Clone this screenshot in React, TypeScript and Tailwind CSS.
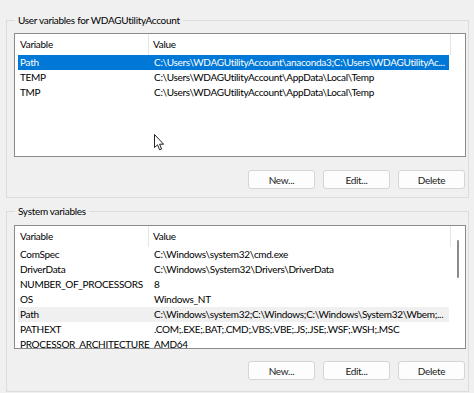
import React from "react";

interface EnvVar {
  name: string;
  value: string;
}

const userVars: EnvVar[] = [
  { name: "Path", value: "C:\\Users\\WDAGUtilityAccount\\anaconda3;C:\\Users\\WDAGUtilityAc..." },
  { name: "TEMP", value: "C:\\Users\\WDAGUtilityAccount\\AppData\\Local\\Temp" },
  { name: "TMP", value: "C:\\Users\\WDAGUtilityAccount\\AppData\\Local\\Temp" },
];

const systemVars: EnvVar[] = [
  { name: "ComSpec", value: "C:\\Windows\\system32\\cmd.exe" },
  { name: "DriverData", value: "C:\\Windows\\System32\\Drivers\\DriverData" },
  { name: "NUMBER_OF_PROCESSORS", value: "8" },
  { name: "OS", value: "Windows_NT" },
  { name: "Path", value: "C:\\Windows\\system32;C:\\Windows;C:\\Windows\\System32\\Wbem;..." },
  { name: "PATHEXT", value: ".COM;.EXE;.BAT;.CMD;.VBS;.VBE;.JS;.JSE;.WSF;.WSH;.MSC" },
  { name: "PROCESSOR_ARCHITECTURE", value: "AMD64" },
];

const Button: React.FC<{ label: string }> = ({ label }) => (
  <button className="w-[67px] h-[19px] bg-[#fdfdfd] border border-[#d5d5d5] rounded-[3px] text-[#1a1a1a] leading-none">
    {label}
  </button>
);

const VarList: React.FC<{
  rows: EnvVar[];
  selected: number;
  focused: boolean;
  scrollbar?: boolean;
}> = ({ rows, selected, focused, scrollbar }) => (
  <div className="relative w-[452px] h-[124px] bg-white border border-[#8a8a8a] overflow-hidden">
    {/* header */}
    <div className="flex h-[21px] items-center w-[436px]">
      <div className="w-[134px] h-full pl-[5px] flex items-center border-r border-[#e5e5e5]">Variable</div>
      <div className="flex-1 h-full pl-[4px] flex items-center border-r border-[#e5e5e5]">Value</div>
    </div>
    {rows.map((r, i) => {
      const sel = i === selected;
      const cls = sel
        ? focused
          ? "bg-[#0078d7] text-white"
          : "bg-[#f0f0f0] text-black"
        : "text-black";
      return (
        <div key={i} className={`flex h-[15px] items-center ml-[3px] w-[431px] ${cls}`}>
          <div className="w-[131px] pl-[2px] whitespace-nowrap">{r.name}</div>
          <div className="flex-1 pl-[5px] whitespace-nowrap">{r.value}</div>
        </div>
      );
    })}
    {scrollbar && (
      <div className="absolute right-[6px] top-[14px] w-[2px] h-[38px] bg-[#8a8a8a] rounded-full" />
    )}
  </div>
);

const Group: React.FC<{ title: string; children: React.ReactNode; className?: string }> = ({
  title,
  children,
  className,
}) => (
  <fieldset className={`ml-[6px] w-[463px] border border-[#dcdcdc] pl-[7px] ${className ?? ""}`}>
    <legend className="ml-[1px] px-[3px] h-[16px] leading-[16px]">{title}</legend>
    {children}
  </fieldset>
);

const Buttons = () => (
  <div className="flex justify-end gap-[8px] w-[451px]">
    <Button label="New..." />
    <Button label="Edit..." />
    <Button label="Delete" />
  </div>
);

export default function App() {
  return (
    <div
      className="relative w-[474px] h-[393px] overflow-hidden bg-[#f0f0f0] text-[10px] tracking-[-0.3px] text-black"
      style={{ fontFamily: 'Lato, "Noto Sans", sans-serif' }}
    >
      <Group title="User variables for WDAGUtilityAccount" className="mt-[12px] h-[186px]">
        <div className="mt-[5px]">
          <VarList rows={userVars} selected={0} focused />
        </div>
        <div className="mt-[13px]">
          <Buttons />
        </div>
      </Group>
      <Group title="System variables" className="mt-[5px] h-[189px]">
        <div className="mt-[6px]">
          <VarList rows={systemVars} selected={4} focused={false} scrollbar />
        </div>
        <div className="mt-[12px]">
          <Buttons />
        </div>
      </Group>

      {/* mouse pointer */}
      <svg className="absolute left-[154px] top-[134px]" width="11" height="17" viewBox="0 0 11 17">
        <path
          d="M0.5 0.5 L0.5 13.5 L3.5 10.8 L5.6 15.8 L7.6 15 L5.6 10.2 L9.6 10.2 Z"
          fill="white"
          stroke="#222"
          strokeWidth="1"
          strokeLinejoin="round"
        />
      </svg>
    </div>
  );
}
